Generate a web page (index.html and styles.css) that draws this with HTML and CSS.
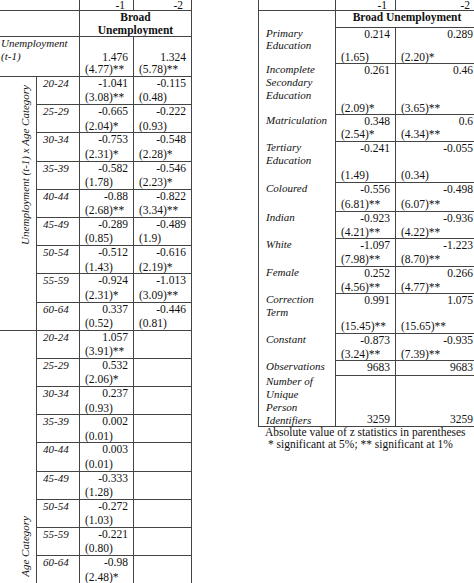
FILE: index.html
```html
<!DOCTYPE html>
<html>
<head>
<meta charset="utf-8">
<link rel="stylesheet" href="styles.css">
</head>
<body>
<div class="page">
  <div class="grid left">
    <div class="c span2"></div>
    <div class="c hd">-1</div>
    <div class="c hd">-2</div>

    <div class="c span2"></div>
    <div class="c bold span2">Broad<br>Unemployment</div>

    <div class="c lab span2 first">Unemployment<br>(t-1)</div>
    <div class="c val low"><span class="coef">1.476</span><span class="z">(4.77)**</span></div>
    <div class="c val low"><span class="coef">1.324</span><span class="z">(5.78)**</span></div>

    <div class="c rot top"><span>Unemployment (t-1) x Age Category</span></div>
    <div class="c lab">20-24</div>
    <div class="c val"><span class="coef">-1.041</span><span class="z">(3.08)**</span></div>
    <div class="c val"><span class="coef">-0.115</span><span class="z">(0.48)</span></div>
    <div class="c lab">25-29</div>
    <div class="c val"><span class="coef">-0.665</span><span class="z">(2.04)*</span></div>
    <div class="c val"><span class="coef">-0.222</span><span class="z">(0.93)</span></div>
    <div class="c lab">30-34</div>
    <div class="c val"><span class="coef">-0.753</span><span class="z">(2.31)*</span></div>
    <div class="c val"><span class="coef">-0.548</span><span class="z">(2.28)*</span></div>
    <div class="c lab">35-39</div>
    <div class="c val"><span class="coef">-0.582</span><span class="z">(1.78)</span></div>
    <div class="c val"><span class="coef">-0.546</span><span class="z">(2.23)*</span></div>
    <div class="c lab">40-44</div>
    <div class="c val"><span class="coef">-0.88</span><span class="z">(2.68)**</span></div>
    <div class="c val"><span class="coef">-0.822</span><span class="z">(3.34)**</span></div>
    <div class="c lab">45-49</div>
    <div class="c val"><span class="coef">-0.289</span><span class="z">(0.85)</span></div>
    <div class="c val"><span class="coef">-0.489</span><span class="z">(1.9)</span></div>
    <div class="c lab">50-54</div>
    <div class="c val"><span class="coef">-0.512</span><span class="z">(1.43)</span></div>
    <div class="c val"><span class="coef">-0.616</span><span class="z">(2.19)*</span></div>
    <div class="c lab">55-59</div>
    <div class="c val"><span class="coef">-0.924</span><span class="z">(2.31)*</span></div>
    <div class="c val"><span class="coef">-1.013</span><span class="z">(3.09)**</span></div>
    <div class="c lab">60-64</div>
    <div class="c val"><span class="coef">0.337</span><span class="z">(0.52)</span></div>
    <div class="c val"><span class="coef">-0.446</span><span class="z">(0.81)</span></div>

    <div class="c rot bottom"><span>Age Category</span></div>
    <div class="c lab">20-24</div>
    <div class="c val"><span class="coef">1.057</span><span class="z">(3.91)**</span></div>
    <div class="c"></div>
    <div class="c lab">25-29</div>
    <div class="c val"><span class="coef">0.532</span><span class="z">(2.06)*</span></div>
    <div class="c"></div>
    <div class="c lab">30-34</div>
    <div class="c val"><span class="coef">0.237</span><span class="z">(0.93)</span></div>
    <div class="c"></div>
    <div class="c lab">35-39</div>
    <div class="c val"><span class="coef">0.002</span><span class="z">(0.01)</span></div>
    <div class="c"></div>
    <div class="c lab">40-44</div>
    <div class="c val"><span class="coef">0.003</span><span class="z">(0.01)</span></div>
    <div class="c"></div>
    <div class="c lab">45-49</div>
    <div class="c val"><span class="coef">-0.333</span><span class="z">(1.28)</span></div>
    <div class="c"></div>
    <div class="c lab">50-54</div>
    <div class="c val"><span class="coef">-0.272</span><span class="z">(1.03)</span></div>
    <div class="c"></div>
    <div class="c lab">55-59</div>
    <div class="c val"><span class="coef">-0.221</span><span class="z">(0.80)</span></div>
    <div class="c"></div>
    <div class="c lab">60-64</div>
    <div class="c val"><span class="coef">-0.98</span><span class="z">(2.48)*</span></div>
    <div class="c"></div>
  </div>

  <div class="side">
    <div class="grid right">
      <div class="c"></div>
      <div class="c hd">-1</div>
      <div class="c hd">-2</div>

      <div class="c"></div>
      <div class="c bold span2 one">Broad Unemployment</div>

      <div class="c lab r">Primary<br>Education</div>
      <div class="c val"><span class="coef">0.214</span><span class="z">(1.65)</span></div>
      <div class="c val"><span class="coef">0.289</span><span class="z">(2.20)*</span></div>

      <div class="c lab r">Incomplete<br>Secondary<br>Education</div>
      <div class="c val"><span class="coef">0.261</span><span class="z">(2.09)*</span></div>
      <div class="c val"><span class="coef">0.46</span><span class="z">(3.65)**</span></div>

      <div class="c lab r">Matriculation</div>
      <div class="c val"><span class="coef">0.348</span><span class="z">(2.54)*</span></div>
      <div class="c val"><span class="coef">0.6</span><span class="z">(4.34)**</span></div>

      <div class="c lab r">Tertiary<br>Education</div>
      <div class="c val"><span class="coef">-0.241</span><span class="z">(1.49)</span></div>
      <div class="c val"><span class="coef">-0.055</span><span class="z">(0.34)</span></div>

      <div class="c lab r">Coloured</div>
      <div class="c val"><span class="coef">-0.556</span><span class="z">(6.81)**</span></div>
      <div class="c val"><span class="coef">-0.498</span><span class="z">(6.07)**</span></div>

      <div class="c lab r">Indian</div>
      <div class="c val"><span class="coef">-0.923</span><span class="z">(4.21)**</span></div>
      <div class="c val"><span class="coef">-0.936</span><span class="z">(4.22)**</span></div>

      <div class="c lab r">White</div>
      <div class="c val"><span class="coef">-1.097</span><span class="z">(7.98)**</span></div>
      <div class="c val"><span class="coef">-1.223</span><span class="z">(8.70)**</span></div>

      <div class="c lab r">Female</div>
      <div class="c val"><span class="coef">0.252</span><span class="z">(4.56)**</span></div>
      <div class="c val"><span class="coef">0.266</span><span class="z">(4.77)**</span></div>

      <div class="c lab r">Correction<br>Term</div>
      <div class="c val"><span class="coef">0.991</span><span class="z">(15.45)**</span></div>
      <div class="c val"><span class="coef">1.075</span><span class="z">(15.65)**</span></div>

      <div class="c lab r">Constant</div>
      <div class="c val"><span class="coef">-0.873</span><span class="z">(3.24)**</span></div>
      <div class="c val"><span class="coef">-0.935</span><span class="z">(7.39)**</span></div>

      <div class="c lab r">Observations</div>
      <div class="c val"><span class="coef">9683</span></div>
      <div class="c val"><span class="coef">9683</span></div>

      <div class="c lab r">Number of<br>Unique<br>Person<br>Identifiers</div>
      <div class="c val low"><span class="coef">3259</span></div>
      <div class="c val low"><span class="coef">3259</span></div>
    </div>
    <div class="note">Absolute value of z statistics in parentheses<br>&nbsp;* significant at 5%; ** significant at 1%</div>
  </div>
</div>
</body>
</html>
```

FILE: styles.css
```css
html, body {
  margin: 0;
  padding: 0;
  overflow: hidden;
  background: #fff;
}

body {
  font-family: "Liberation Serif", "Times New Roman", serif;
  font-size: 11.5px;
  line-height: 12.7px;
  color: #111;
}

.page {
  display: flex;
  align-items: flex-start;
  gap: 66px;
  margin: -2px 0 0 -5px;
}

.grid {
  display: grid;
  gap: 1px;
  padding: 1px;
  background: #444;
}

.left {
  grid-template-columns: 40px 42px 53px 57px;
  grid-template-rows: 11px 25px 39px repeat(18, 27.2px);
}

.right {
  grid-template-columns: 76px 59px 82px;
  grid-template-rows: 11px 15.7px 35.6px 50px 25.7px 39.7px 28.3px 26.3px 26.7px 26.3px 38.4px 26.6px 14.2px 49.5px;
}

.c {
  background: #fff;
  overflow: hidden;
  white-space: nowrap;
}

.span2 {
  grid-column: span 2;
}

.hd {
  display: flex;
  align-items: flex-end;
  justify-content: flex-end;
  padding-right: 8px;
  line-height: 10px;
}

.bold {
  font-weight: bold;
  text-align: center;
}

.lab {
  font-style: italic;
  font-size: 11px;
  padding-left: 6px;
}

.lab.first {
  padding-left: 5px;
}

.lab.r {
  padding-left: 7px;
  margin-top: -1px;
}

.val {
  display: flex;
  flex-direction: column;
  justify-content: space-between;
  padding: 0 5px;
}

.val.low {
  justify-content: flex-end;
}

.coef {
  text-align: right;
}

.z {
  text-align: left;
}

.rot {
  grid-row: span 9;
  display: flex;
  justify-content: flex-end;
  padding-right: 4px;
}

.rot span {
  writing-mode: vertical-rl;
  transform: rotate(180deg);
  font-style: italic;
  font-size: 11px;
}

.rot.top {
  align-items: flex-start;
  padding-top: 8px;
}

.rot.bottom {
  align-items: flex-end;
  padding-bottom: 7px;
}

.side {
  display: flex;
  flex-direction: column;
}

.note {
  padding-left: 7px;
  line-height: 11.7px;
}
```
